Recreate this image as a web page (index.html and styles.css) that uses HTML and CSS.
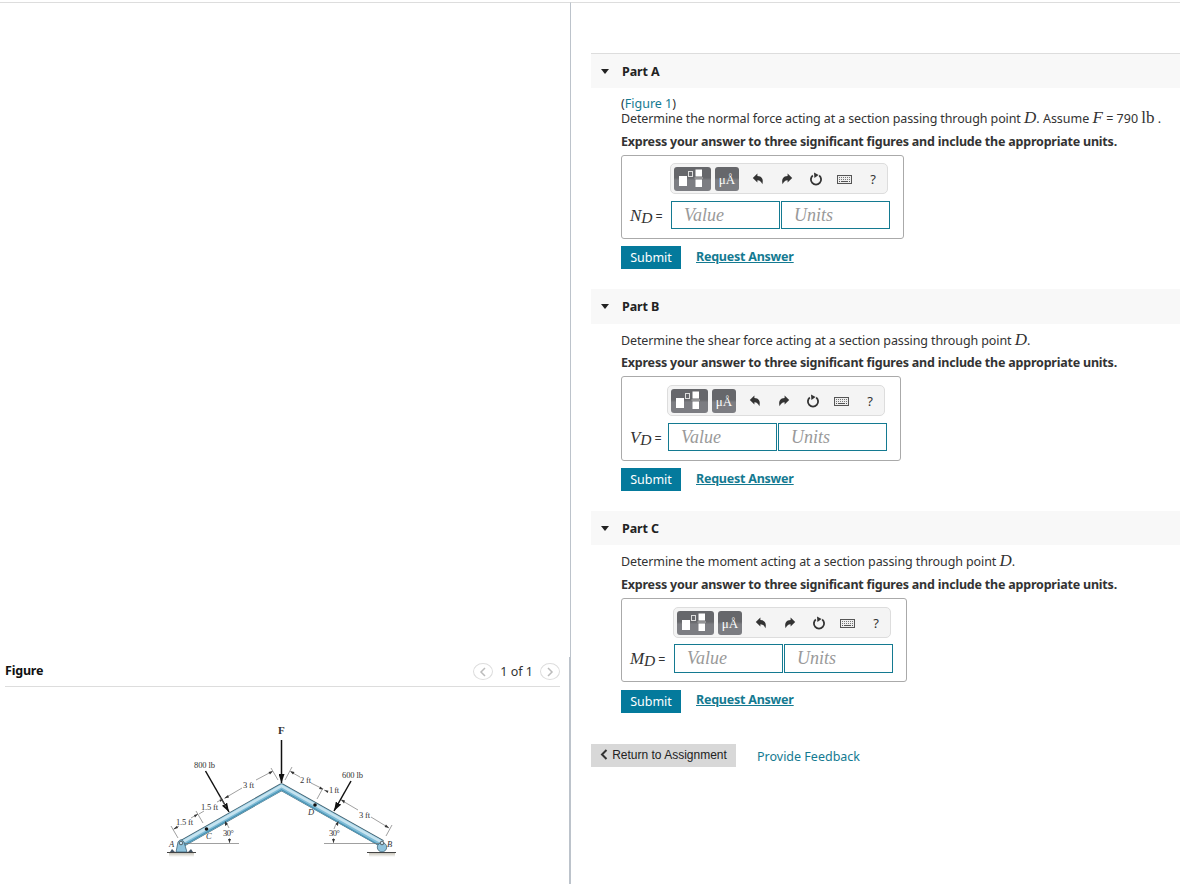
FILE: index.html
```html
<!DOCTYPE html>
<html lang="en">
<head>
  <meta charset="UTF-8" />
  <title>Assignment</title>
  <meta name="viewport" content="width=device-width, initial-scale=1" />
  <link rel="stylesheet" href="styles.css">
</head>
<body>
  <!-- Shared icons -->
  <svg class="icon-defs" width="0" height="0" aria-hidden="true">
    <symbol id="template" viewBox="0 0 37 24">
      <rect x="5" y="9" width="8" height="10" fill="#fff" />
      <rect x="14.5" y="4.5" width="4" height="5" fill="none" stroke="#ddd" />
      <rect x="21.5" y="2.500" width="6.500" height="7" fill="#fff" />
      <rect x="20.500" y="10.500" width="8.500" height="1" fill="#bbb" />
      <rect x="21.5" y="12.500" width="6.500" height="7.500" fill="#fff" />
    </symbol>
    <symbol id="undo" viewBox="0 0 12 12">
      <path d="M0.8 5 L5.4 0.6 V3 C9.6 3 11.8 6 10.4 11.2 C9.4 8.800 8 7.300 5.4 7.200 V9.400 Z" fill="#333" />
    </symbol>
    <symbol id="reset" viewBox="0 0 14 14">
      <path d="M3.800 3.500 A5.100 5.100 0 1 0 10.200 3.500" fill="none" stroke="#333" stroke-width="1.8" />
      <path d="M5 0.4 L9.600 3 L5.400 6 Z" fill="#333" />
    </symbol>
    <symbol id="keyboard" viewBox="0 0 15 10">
      <rect x="0.5" y="0.5" width="14" height="8" fill="#eee" stroke="#555" />
      <path d="M2 2.5 H13 M2 4.5 H13" stroke="#777" stroke-dasharray="1 1" />
      <path d="M2 6.5 H3 M4 6.5 H11 M12 6.5 H13" stroke="#555" />
    </symbol>
  </svg>

  <div class="left-pane">
    <div class="figure-panel">
      <div class="figure-header">
        <h2>Figure</h2>
        <div class="pager">
          <button aria-label="Previous"><svg width="8" height="10"><path d="M6 1 L2 5 L6 9" /></svg></button>
          <span>1 of 1</span>
          <button aria-label="Next"><svg width="8" height="10"><path d="M2 1 L6 5 L2 9" /></svg></button>
        </div>
      </div>
      <svg class="figure" width="260" height="150" viewBox="150 715 260 150">
        <defs>
          <marker id="arrow" viewBox="0 0 9 6" refX="9" refY="3" markerWidth="9" markerHeight="6" markerUnits="userSpaceOnUse" orient="auto">
            <path d="M0 0 L9 3 L0 6 Z" fill="#111" />
          </marker>
          <linearGradient id="ground" x1="0" y1="0" x2="0" y2="1">
            <stop offset="0" stop-color="#b9b5a6" />
            <stop offset="1" stop-color="#fff" />
          </linearGradient>
        </defs>

        <!-- supports -->
        <rect x="169" y="852" width="25" height="5" fill="url(#ground)" />
        <rect x="369" y="852" width="26" height="5" fill="url(#ground)" />
        <path d="M167 852.5 H196 M367 852.5 H396" stroke="#444" />
        <path d="M170 852 L172 849 L175 852 Z M188 852 L191 849 L193 852 Z" fill="#456" />

        <!-- beam -->
        <g fill="none" stroke-linejoin="round">
          <path d="M182 843.5 L281.5 787 L382 843.5" stroke="#44606d" stroke-width="7.4" />
          <path d="M182 843.7 L281.5 787.2 L382 843.7" stroke="#7fbcd7" stroke-width="6.2" />
          <path d="M182 842.300 L281.5 785.900 L382 842.300" stroke="#c6e3ef" stroke-width="2.800" />
          <path d="M182 846.200 L281.5 789.8 L381 846.200" stroke="#4a93b3" stroke-width="1.2" />
        </g>
        <path d="M176 852 L178 842 Q181 837.5 184 842 L187 852 Z" fill="#8fc3dc" stroke="#34586a" stroke-width="0.7" />
        <circle cx="181" cy="843" r="1.8" fill="#c9e2ee" stroke="#333" stroke-width="0.7" />
        <circle cx="382" cy="847.2" r="4.7" fill="#8fc3dc" stroke="#34586a" stroke-width="0.7" />
        <circle cx="382" cy="843" r="1.8" fill="#c9e2ee" stroke="#333" stroke-width="0.7" />
        <circle cx="206.5" cy="829" r="1.8" fill="#111" />
        <circle cx="315" cy="805" r="1.8" fill="#111" />

        <!-- loads -->
        <g stroke="#111" stroke-width="1.5">
          <path d="M281.5 740 V783" marker-end="url(#arrow)" />
          <path d="M205.5 771 L229 812" marker-end="url(#arrow)" />
          <path d="M351 781 L334 811" marker-end="url(#arrow)" />
        </g>

        <!-- dimensions -->
        <g stroke="#777" stroke-width="0.7" fill="none">
          <path d="M171 826 L178 838 M196 811 L203 823 M220 797 L226 807 M271 768 L278 780" />
          <path d="M292 767 L285 780 M323 788 L317 799 M392 825 L386 836" />
          <path d="M174 829 L179 826 M191 818 L198 814 M199 814 L204 811 M217 802 L223 799 M225 798 L242 788 M256 780 L272 771.5" />
          <path d="M291 772 L300 777 M311 783 L323 789 M324 790 L328 792 M341 800 L358 810 M371 817 L389 828" />
          <path d="M185 843.5 H239 M324 843.5 H379" />
          <path d="M229.5 843 V838 M225 822 Q228 825 229 828" />
          <path d="M333.5 843 V838 M338 822 Q335 825 334 829" />
        </g>
        <g fill="#333">
          <path d="M173 829.5 L177 825.8 L178 828 Z M198 814 L194 815 L195 817.500 Z M223 799 L219.500 799.800 L220.500 802 Z M224 798.500 L228 795 L229 797.500 Z M273 771 L268.500 772 L270 774.500 Z" />
          <path d="M290 771 L294.500 772 L293 774.500 Z M323 789.500 L319 789 L320.500 786.500 Z M324.500 790 L328.500 790.800 L327.500 793 Z M341 799.5 L345 800.5 L344 803.500 Z M389 828 L384.500 827 L386 824.500 Z" />
          <path d="M229.5 843 L228 839 H231 Z M225 821 L225 826 L228 824 Z M333.5 843 L332 839 H335 Z M338.5 821 L338 826 L335.5 824 Z" />
        </g>

        <g class="figure-labels">
          <text class="force" x="278" y="734">F</text>
          <text x="194" y="768" textLength="21">800 lb</text>
          <text x="342" y="778" textLength="21">600 lb</text>
          <text x="243" y="788" textLength="11">3 ft</text>
          <text x="201" y="810" textLength="17">1.5 ft</text>
          <text x="176" y="825" textLength="17">1.5 ft</text>
          <text x="300" y="783" textLength="11">2 ft</text>
          <text x="329" y="793" textLength="10">1 ft</text>
          <text x="359" y="818" textLength="11">3 ft</text>
          <text x="223" y="836" textLength="11">30°</text>
          <text x="329" y="836" textLength="11">30°</text>
          <text class="point" x="169" y="847">A</text>
          <text class="point" x="206" y="839">C</text>
          <text class="point" x="308" y="815">D</text>
          <text class="point" x="387" y="847">B</text>
        </g>
      </svg>
    </div>
  </div>

  <main class="right-pane">
    <section class="part part-a">
      <header class="part-header"><span class="caret"></span><h3>Part A</h3></header>
      <div class="part-body">
        <p class="figure-ref">(<a href="#">Figure 1</a>)</p>
        <p class="question"><span class="prompt">Determine the normal force acting at a section passing through point</span> <i class="math">D</i>. Assume <i class="math">F</i> = 790 <span class="math">lb</span> .</p>
        <p class="hint">Express your answer to three significant figures and include the appropriate units.</p>
        <div class="answer-box">
          <div class="toolbar">
            <button class="tool dark wide" aria-label="Templates"><svg width="37" height="24"><use href="#template" /></svg></button>
            <button class="tool dark">μÅ</button>
            <button class="tool" aria-label="Undo"><svg width="12" height="12"><use href="#undo" /></svg></button>
            <button class="tool" aria-label="Redo"><svg class="flip" width="12" height="12"><use href="#undo" /></svg></button>
            <button class="tool" aria-label="Reset"><svg width="14" height="14"><use href="#reset" /></svg></button>
            <button class="tool" aria-label="Keyboard"><svg class="keys" width="15" height="10"><use href="#keyboard" /></svg></button>
            <button class="tool">?</button>
          </div>
          <div class="answer-row">
            <label><i>N<span class="sub">D</span></i> =</label>
            <input type="text" placeholder="Value">
            <input type="text" placeholder="Units">
          </div>
        </div>
        <div class="actions">
          <button class="submit">Submit</button>
          <a href="#">Request Answer</a>
        </div>
      </div>
    </section>

    <section class="part part-b">
      <header class="part-header"><span class="caret"></span><h3>Part B</h3></header>
      <div class="part-body">
        <p class="question"><span class="prompt">Determine the shear force acting at a section passing through point</span> <i class="math">D</i>.</p>
        <p class="hint">Express your answer to three significant figures and include the appropriate units.</p>
        <div class="answer-box">
          <div class="toolbar">
            <button class="tool dark wide" aria-label="Templates"><svg width="37" height="24"><use href="#template" /></svg></button>
            <button class="tool dark">μÅ</button>
            <button class="tool" aria-label="Undo"><svg width="12" height="12"><use href="#undo" /></svg></button>
            <button class="tool" aria-label="Redo"><svg class="flip" width="12" height="12"><use href="#undo" /></svg></button>
            <button class="tool" aria-label="Reset"><svg width="14" height="14"><use href="#reset" /></svg></button>
            <button class="tool" aria-label="Keyboard"><svg class="keys" width="15" height="10"><use href="#keyboard" /></svg></button>
            <button class="tool">?</button>
          </div>
          <div class="answer-row">
            <label><i>V<span class="sub">D</span></i> =</label>
            <input type="text" placeholder="Value">
            <input type="text" placeholder="Units">
          </div>
        </div>
        <div class="actions">
          <button class="submit">Submit</button>
          <a href="#">Request Answer</a>
        </div>
      </div>
    </section>

    <section class="part part-c">
      <header class="part-header"><span class="caret"></span><h3>Part C</h3></header>
      <div class="part-body">
        <p class="question"><span class="prompt">Determine the moment acting at a section passing through point</span> <i class="math">D</i>.</p>
        <p class="hint">Express your answer to three significant figures and include the appropriate units.</p>
        <div class="answer-box">
          <div class="toolbar">
            <button class="tool dark wide" aria-label="Templates"><svg width="37" height="24"><use href="#template" /></svg></button>
            <button class="tool dark">μÅ</button>
            <button class="tool" aria-label="Undo"><svg width="12" height="12"><use href="#undo" /></svg></button>
            <button class="tool" aria-label="Redo"><svg class="flip" width="12" height="12"><use href="#undo" /></svg></button>
            <button class="tool" aria-label="Reset"><svg width="14" height="14"><use href="#reset" /></svg></button>
            <button class="tool" aria-label="Keyboard"><svg class="keys" width="15" height="10"><use href="#keyboard" /></svg></button>
            <button class="tool">?</button>
          </div>
          <div class="answer-row">
            <label><i>M<span class="sub">D</span></i> =</label>
            <input type="text" placeholder="Value">
            <input type="text" placeholder="Units">
          </div>
        </div>
        <div class="actions">
          <button class="submit">Submit</button>
          <a href="#">Request Answer</a>
        </div>
      </div>
    </section>

    <footer class="page-actions">
      <button class="return"><svg width="8" height="11"><path d="M6.5 1 L2 5.5 L6.5 10" /></svg>Return to Assignment</button>
      <a href="#">Provide Feedback</a>
    </footer>
  </main>
</body>
</html>
```
FILE: styles.css
```css
* {
  box-sizing: border-box;
}
body {
  margin: 0;
  height: 884px;
  padding-top: 2px;
  display: flex;
  overflow: hidden;
  background: #fff;
  color: #333;
  font-family: "Noto Sans", "Open Sans", sans-serif;
  font-size: 12.5px;
}
h2, h3, p {
  margin: 0;
}
button {
  border: none;
  padding: 0;
  font-family: inherit;
}
a {
  color: #147a91;
  text-decoration: none;
}
.icon-defs {
  position: absolute;
}

/* left side */
.left-pane {
  width: 571px;
  flex-shrink: 0;
  border-top: 1px solid #ddd;
  border-right: 1px solid #bcc3cb;
  display: flex;
  flex-direction: column;
  justify-content: flex-end;
}
.figure-panel {
  height: 227px;
  padding: 0 9px 0 5px;
  border-right: 1px solid #bcc3cb;
}
.figure-header {
  height: 30px;
  display: flex;
  justify-content: space-between;
  align-items: center;
  border-bottom: 1px solid #ddd;
}
.figure-header h2 {
  font-size: 12.5px;
  letter-spacing: -0.2px;
  color: #111;
  margin-top: -3px;
}
.pager {
  display: flex;
  align-items: center;
  gap: 7px;
}
.pager button {
  width: 20px;
  height: 17px;
  border: 1px solid #ddd;
  border-radius: 50%;
  background: #fff;
  display: flex;
  align-items: center;
  justify-content: center;
}
.pager path {
  fill: none;
  stroke: #bbb;
  stroke-width: 1.5;
}
.figure {
  display: block;
  margin: 28px 0 0 145px;
}
.figure-labels {
  font-family: "Liberation Serif", serif;
  font-size: 8.5px;
  fill: #333;
}
.figure-labels .force {
  font-size: 11px;
  font-weight: bold;
}
.figure-labels .point {
  font-style: italic;
}

/* right side */
.right-pane {
  flex: 1;
  border-top: 1px solid #ddd;
  padding: 50px 0 0 20px;
}
.part-header {
  height: 35px;
  padding-left: 10px;
  display: flex;
  align-items: center;
  background: #f8f8f8;
}
.part-a .part-header {
  border-top: 1px solid #ddd;
}
.part-header h3 {
  font-size: 12.5px;
  letter-spacing: -0.1px;
  color: #222;
}
.caret {
  margin-right: 13px;
  border: 4px solid transparent;
  border-top: 5px solid #222;
  border-bottom: none;
}
.part-body {
  padding: 9px 0 0 30px;
}
.part-a .part-body {
  height: 201px;
  padding-top: 8px;
}
.part-b .part-body {
  height: 187px;
}
.part-c .part-header {
  height: 34px;
}
.part-body p {
  height: 15px;
  line-height: 15px;
  white-space: nowrap;
}
.prompt {
  letter-spacing: -0.11px;
}
.math {
  font-family: "Liberation Serif", serif;
  font-size: 17px;
  line-height: 1px;
}
.part-body .hint {
  margin: 7px 0 6px;
  font-weight: bold;
  letter-spacing: -0.21px;
}
.part-c .hint {
  margin-top: 8px;
}
.part-a .hint {
  margin-top: 8px;
}
.answer-box {
  width: 283px;
  height: 84px;
  padding: 7px 13px 0 8px;
  border: 1px solid #aaa;
  border-radius: 3px;
}
.part-b .answer-box {
  width: 280px;
  height: 85px;
  padding-top: 8px;
}
.part-c .answer-box {
  width: 286px;
  padding-top: 8px;
}
.toolbar {
  width: 218px;
  height: 31px;
  margin: 0 2px 7px auto;
  padding: 0 3px;
  display: flex;
  align-items: center;
  border: 1px solid #ddd;
  border-radius: 5px;
  background: #f4f4f4;
}
.part-c .toolbar {
  margin-bottom: 6px;
}
.tool {
  width: 28.7px;
  height: 24px;
  flex-shrink: 0;
  display: flex;
  align-items: center;
  justify-content: center;
  background: none;
  color: #333;
  font-size: 13px;
}
.tool.dark {
  width: 24px;
  margin: 0 5px 0 0;
  padding-top: 2px;
  border-radius: 3px;
  background: linear-gradient(#66676b 45%, #7c7d82 55%);
  color: #fff;
  font-family: "Liberation Serif", serif;
  font-size: 13px;
}
.tool.dark.wide {
  width: 37px;
  margin-right: 4px;
  padding-top: 0;
}
.flip {
  transform: scaleX(-1);
}
.keys {
  margin-top: 3px;
}
.answer-row {
  display: flex;
  align-items: center;
}
.answer-row label {
  flex: 1;
  white-space: nowrap;
  line-height: 20px;
  padding-top: 2px;
  letter-spacing: -0.1px;
}
.answer-row label i {
  font-family: "Liberation Serif", serif;
  font-size: 17px;
}
.sub {
  position: relative;
  top: 2px;
  font-size: 15.5px;
}
.answer-row input {
  width: 109px;
  height: 28px;
  margin-left: 1px;
  padding: 0 0 0 12px;
  border: 1px solid #147a91;
  border-radius: 0;
  background: #fff;
  font-family: "Liberation Serif", serif;
  font-style: italic;
  font-size: 18px;
}
.answer-row input::placeholder {
  color: #999;
}
.part-c input {
  height: 29px;
}
.actions {
  margin-top: 7px;
  display: flex;
  align-items: flex-start;
}
.part-c .actions {
  margin-top: 8px;
}
.submit {
  width: 60px;
  height: 23px;
  padding-bottom: 1px;
  background: #047a9c;
  color: #fff;
  font-size: 12.5px;
}
.actions a {
  margin-left: 15px;
  line-height: 21px;
  font-weight: bold;
  letter-spacing: -0.23px;
  text-decoration: underline;
}
.part-c .actions a {
  line-height: 19px;
}
.page-actions {
  margin-top: 31px;
  display: flex;
}
.return {
  width: 145px;
  height: 23px;
  padding-bottom: 2px;
  display: flex;
  align-items: center;
  justify-content: center;
  gap: 4px;
  background: #d8d8d8;
  color: #222;
  font-family: "Liberation Sans", sans-serif;
  font-size: 12px;
}
.return path {
  fill: none;
  stroke: #333;
  stroke-width: 2;
}
.page-actions a {
  margin-left: 21px;
  line-height: 26px;
}
```
